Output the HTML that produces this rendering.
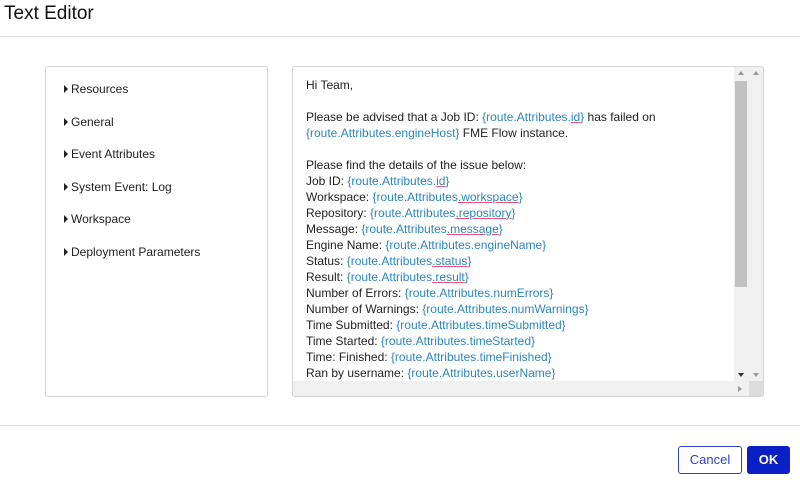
<!DOCTYPE html>
<html><head><style>
*{margin:0;padding:0;box-sizing:border-box}
body{width:800px;height:480px;background:#fff;font-family:"Liberation Sans",sans-serif;color:#222;position:relative;overflow:hidden}
.title{position:absolute;left:4px;top:3px;font-size:19px;color:#111}
.hl{position:absolute;left:0;width:800px;height:1px;background:#ddd}
.left{position:absolute;left:45px;top:66px;width:223px;height:331px;border:1px solid #d6d6d6;border-radius:3px}
.item{position:absolute;left:25px;font-size:12px;color:#222}
.item:before{content:"";position:absolute;left:-7px;top:3px;border-left:4px solid #222;border-top:4px solid transparent;border-bottom:4px solid transparent}
.right{position:absolute;left:292px;top:66px;width:472px;height:331px;border:1px solid #d6d6d6;border-radius:3px;overflow:hidden;background:#f0f0f0}
.ta{position:absolute;left:0;top:0;width:441px;height:314px;background:#fff;padding:10px 0 0 13px;font-size:12px;line-height:16px;overflow:hidden;white-space:nowrap}
.v{color:#2a86c4}
.u{text-decoration:underline;text-decoration-color:#e8507a;text-decoration-thickness:1px}
.thumb{position:absolute;left:442px;top:14px;width:12px;height:206px;background:#c1c1c1}
.corner{position:absolute;left:456px;top:314px;width:16px;height:17px;background:#dcdcdc}
.btn{position:absolute;top:446px;height:28px;font-size:13px;border-radius:3px;text-align:center;line-height:26px}
</style></head><body>
<div class="title">Text Editor</div>
<div class="hl" style="top:36px"></div>
<div class="left">
<div class="item" style="top:15px">Resources</div>
<div class="item" style="top:48px">General</div>
<div class="item" style="top:80px">Event Attributes</div>
<div class="item" style="top:113px">System Event: Log</div>
<div class="item" style="top:145px">Workspace</div>
<div class="item" style="top:178px">Deployment Parameters</div>
</div>
<div class="right">
<div class="ta">Hi Team,<br><br>
Please be advised that a Job ID: <span class="v">{route.Attributes.<span class="u">id</span>}</span> has failed on<br>
<span class="v">{route.Attributes.engineHost}</span> FME Flow instance.<br><br>
Please find the details of the issue below:<br>
Job ID: <span class="v">{route.Attributes.<span class="u">id</span>}</span><br>
Workspace: <span class="v">{route.Attributes<span class="u">.workspace</span>}</span><br>
Repository: <span class="v">{route.Attributes<span class="u">.repository</span>}</span><br>
Message: <span class="v">{route.Attributes<span class="u">.message</span>}</span><br>
Engine Name: <span class="v">{route.Attributes.engineName}</span><br>
Status: <span class="v">{route.Attributes<span class="u">.status</span>}</span><br>
Result: <span class="v">{route.Attributes<span class="u">.result</span>}</span><br>
Number of Errors: <span class="v">{route.Attributes.numErrors}</span><br>
Number of Warnings: <span class="v">{route.Attributes.numWarnings}</span><br>
Time Submitted: <span class="v">{route.Attributes.timeSubmitted}</span><br>
Time Started: <span class="v">{route.Attributes.timeStarted}</span><br>
Time: Finished: <span class="v">{route.Attributes.timeFinished}</span><br>
Ran by username: <span class="v">{route.Attributes.userName}</span>
</div>
<div class="thumb"></div>
<div style="position:absolute;left:445px;top:4px;border-bottom:4px solid #999;border-left:3px solid transparent;border-right:3px solid transparent"></div>
<div style="position:absolute;left:460px;top:4px;border-bottom:4px solid #999;border-left:3px solid transparent;border-right:3px solid transparent"></div>
<div style="position:absolute;left:445px;top:306px;border-top:4px solid #333;border-left:3px solid transparent;border-right:3px solid transparent"></div>
<div style="position:absolute;left:460px;top:306px;border-top:4px solid #999;border-left:3px solid transparent;border-right:3px solid transparent"></div>
<div style="position:absolute;left:445px;top:319px;border-left:4px solid #999;border-top:3px solid transparent;border-bottom:3px solid transparent"></div>
<div class="corner"></div>
</div>
<div class="hl" style="top:425px"></div>
<div class="btn" style="left:678px;width:64px;border:1px solid #2f3fcf;color:#2f3fcf;background:#fff">Cancel</div>
<div class="btn" style="left:747px;width:43px;background:#0a1fc4;color:#fff;font-weight:bold;line-height:28px">OK</div>
</body></html>
